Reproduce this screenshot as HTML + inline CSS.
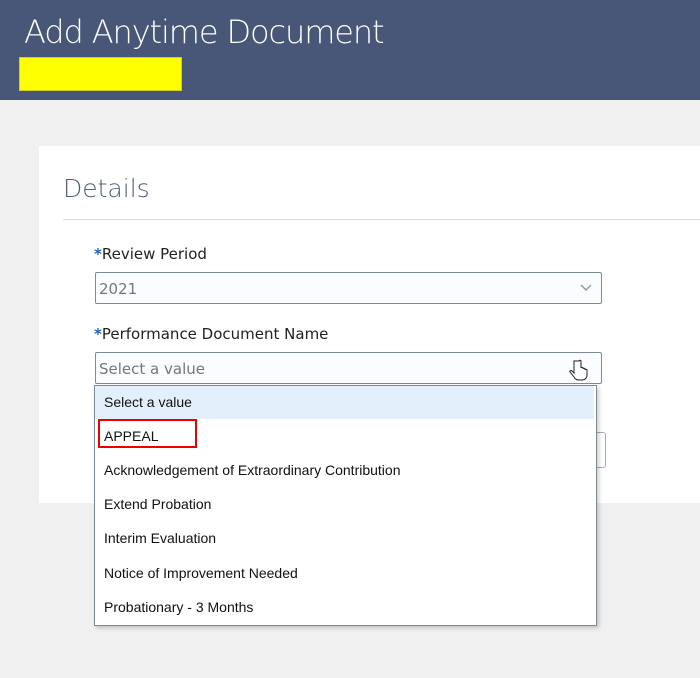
<!DOCTYPE html>
<html><head><style>
body{margin:0;width:700px;height:678px;background:#f0f0f0;font-family:"Liberation Sans",sans-serif;position:relative;overflow:hidden}
.hdr{position:absolute;left:0;top:0;width:700px;height:100px;background:#485677}
.hdr h1{position:absolute;left:24px;top:13px;margin:0;font-size:32px;color:#fff;font-family:"DejaVu Sans","Liberation Sans",sans-serif;font-weight:200;letter-spacing:-1.1px}
.yel{position:absolute;left:19px;top:57px;width:163px;height:34px;background:#ff0;box-sizing:border-box;border:1px solid #cc3}
.card{position:absolute;left:39px;top:146px;width:661px;height:357px;background:#fff}
.det{position:absolute;left:63px;top:174px;font-size:25px;color:#4f5d7e;font-family:"DejaVu Sans",sans-serif;font-weight:200}
.hr{position:absolute;left:63px;top:219px;width:637px;height:1px;background:#d6dde5}
.lbl{position:absolute;left:94px;font-size:15px;color:#222;font-family:"DejaVu Sans",sans-serif}
.lbl b{color:#1565c0;font-weight:bold}
.inp{position:absolute;left:95px;width:507px;height:32px;box-sizing:border-box;border:1px solid #7a8a96;background:#fafcff;border-radius:2px;font-size:15px;color:#777;padding:7px 0 0 3px;font-family:"DejaVu Sans",sans-serif}
.dd{position:absolute;left:94px;top:385px;width:503px;height:241px;box-sizing:border-box;border:1px solid #7a8a96;background:#fff;box-shadow:2px 2px 4px rgba(0,0,0,.2)}
.it{position:absolute;left:9px;font-size:14px;color:#111}
</style></head><body>
<div class="hdr"><h1>Add Anytime Document</h1><div class="yel"></div></div>
<div class="card"></div>
<div class="det">Details</div>
<div class="hr"></div>
<div class="lbl" style="top:245px"><b>*</b>Review Period</div>
<div class="inp" style="top:272px">2021<svg style="position:absolute;right:9px;top:11px" width="12" height="8"><path d="M1 1l5 5 5-5" stroke="#999" fill="none" stroke-width="1.5"/></svg></div>
<div class="lbl" style="top:325px"><b>*</b>Performance Document Name</div>
<div class="inp" style="top:352px">Select a value</div>
<div style="position:absolute;left:556px;top:432px;width:48px;height:34px;border:1px solid #aaa;border-radius:3px;background:#fff"></div>
<div class="dd">
<div style="position:absolute;left:0;top:0;width:499px;height:33px;background:#e3f0fc"></div>
<div class="it" style="top:8px">Select a value</div>
<div style="position:absolute;left:3px;top:33px;width:99px;height:29px;box-sizing:border-box;border:2px solid #e00"></div>
<div class="it" style="top:42px">APPEAL</div>
<div class="it" style="top:76px">Acknowledgement of Extraordinary Contribution</div>
<div class="it" style="top:110px">Extend Probation</div>
<div class="it" style="top:144px">Interim Evaluation</div>
<div class="it" style="top:179px">Notice of Improvement Needed</div>
<div class="it" style="top:213px">Probationary - 3 Months</div>
</div>
<svg style="position:absolute;left:569px;top:359px" width="20" height="24"><path d="M5 2v12l-2-2c-1-1-3 0-2 1l4 5c1 2 3 3 5 3h3c3 0 5-2 5-5v-5c0-1-2-1-2 0v-1c0-1-2-1-2 0v-1c0-1-2-1-2 0V2c0-1-2-1-2 0z" fill="#fff" stroke="#222" stroke-width="1"/></svg>
</body></html>
